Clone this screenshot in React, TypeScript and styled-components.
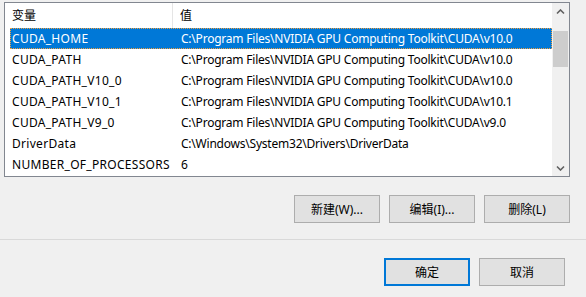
import React from 'react'
import styled, { createGlobalStyle } from 'styled-components';

const GlobalStyle = createGlobalStyle`
    html, body {
        margin: 0;
        padding: 0;
        background: #f0f0f0;
    }
    body {
        font-family: "Noto Sans", "Noto Sans CJK SC", sans-serif;
        font-size: 12px;
        color: #000;
    }
`;

const Dialog = styled.div`
    width: 586px;
    height: 297px;
    display: flex;
    flex-direction: column;
    background: #f0f0f0;
    overflow: hidden;
`;

const ListBox = styled.div`
    margin: 2px 16px 0 4px;
    height: 173px;
    border: 1px solid #828790;
    background: #fff;
    display: flex;
`;

const Table = styled.div`
    flex: 1;
    display: flex;
    flex-direction: column;
`;

const Header = styled.div`
    height: 25px;
    display: flex;
    align-items: center;
`;

const HeaderCell = styled.div<{ $w?: number }>`
    width: ${p => (p.$w ? `${p.$w}px` : 'auto')};
    flex: ${p => (p.$w ? 'none' : 1)};
    height: 100%;
    display: flex;
    align-items: center;
    padding-left: 7px;
    padding-bottom: 2px;
    box-sizing: border-box;
    border-right: ${p => (p.$w ? '1px solid #e5e5e5' : 'none')};
`;

const Row = styled.div<{ $selected?: boolean }>`
    height: 21px;
    margin-left: 5px;
    display: flex;
    align-items: center;
    box-sizing: border-box;
    background: ${p => (p.$selected ? '#0078d7' : 'transparent')};
    color: ${p => (p.$selected ? '#fff' : '#000')};
    border: 1px dotted ${p => (p.$selected ? '#f0a040' : 'transparent')};
`;

const NameCell = styled.div`
    width: 162px;
    padding-left: 1px;
    letter-spacing: 0.3px;
    white-space: nowrap;
    overflow: hidden;
`;

const ValueCell = styled.div`
    flex: 1;
    padding-left: 7px;
    letter-spacing: -0.22px;
    white-space: nowrap;
    overflow: hidden;
`;

const ScrollBar = styled.div`
    width: 17px;
    background: #f0f0f0;
    display: flex;
    flex-direction: column;
    align-items: center;
`;

const Arrow = styled.div`
    height: 17px;
    width: 17px;
    display: flex;
    align-items: center;
    justify-content: center;
`;

const Thumb = styled.div`
    width: 15px;
    height: 36px;
    margin-top: 11px;
    background: #cdcdcd;
`;

const Spacer = styled.div`
    flex: 1;
`;

const ButtonRow = styled.div<{ $right: number; $top: number }>`
    display: flex;
    justify-content: flex-end;
    gap: 9px;
    margin-top: ${p => p.$top}px;
    padding-right: ${p => p.$right}px;
`;

const Button = styled.button<{ $default?: boolean }>`
    width: 86px;
    height: 28px;
    box-sizing: border-box;
    background: #e1e1e1;
    border: ${p => (p.$default ? '2px solid #0078d7' : '1px solid #adadad')};
    font-family: inherit;
    font-size: 12px;
    color: #000;
    padding: 0;
`;

const Separator = styled.div`
    margin-top: 16px;
    height: 1px;
    background: #d9d9d9;
`;

const rows = [
    ['CUDA_HOME', 'C:\\Program Files\\NVIDIA GPU Computing Toolkit\\CUDA\\v10.0'],
    ['CUDA_PATH', 'C:\\Program Files\\NVIDIA GPU Computing Toolkit\\CUDA\\v10.0'],
    ['CUDA_PATH_V10_0', 'C:\\Program Files\\NVIDIA GPU Computing Toolkit\\CUDA\\v10.0'],
    ['CUDA_PATH_V10_1', 'C:\\Program Files\\NVIDIA GPU Computing Toolkit\\CUDA\\v10.1'],
    ['CUDA_PATH_V9_0', 'C:\\Program Files\\NVIDIA GPU Computing Toolkit\\CUDA\\v9.0'],
    ['DriverData', 'C:\\Windows\\System32\\Drivers\\DriverData'],
    ['NUMBER_OF_PROCESSORS', '6'],
];

function Chevron({ down }: { down?: boolean }) {
    return (
        <svg width="9" height="6" viewBox="0 0 9 6">
            <path
                d={down ? 'M1 1.5 L4.5 5 L8 1.5' : 'M1 4.5 L4.5 1 L8 4.5'}
                fill="none"
                stroke="#606060"
                strokeWidth="1.6"
            />
        </svg>
    );
}

export default function App() {
    return (
        <Dialog>
            <GlobalStyle />
            <ListBox>
                <Table>
                    <Header>
                        <HeaderCell $w={168}>变量</HeaderCell>
                        <HeaderCell>值</HeaderCell>
                    </Header>
                    {rows.map(([name, value], i) => (
                        <Row key={name} $selected={i === 0}>
                            <NameCell>{name}</NameCell>
                            <ValueCell>{value}</ValueCell>
                        </Row>
                    ))}
                </Table>
                <ScrollBar>
                    <Arrow><Chevron /></Arrow>
                    <Thumb />
                    <Spacer />
                    <Arrow><Chevron down /></Arrow>
                </ScrollBar>
            </ListBox>
            <ButtonRow $right={16} $top={18}>
                <Button>新建(W)...</Button>
                <Button>编辑(I)...</Button>
                <Button>删除(L)</Button>
            </ButtonRow>
            <Separator />
            <ButtonRow $right={21} $top={18}>
                <Button $default>确定</Button>
                <Button>取消</Button>
            </ButtonRow>
        </Dialog>
    )
}
